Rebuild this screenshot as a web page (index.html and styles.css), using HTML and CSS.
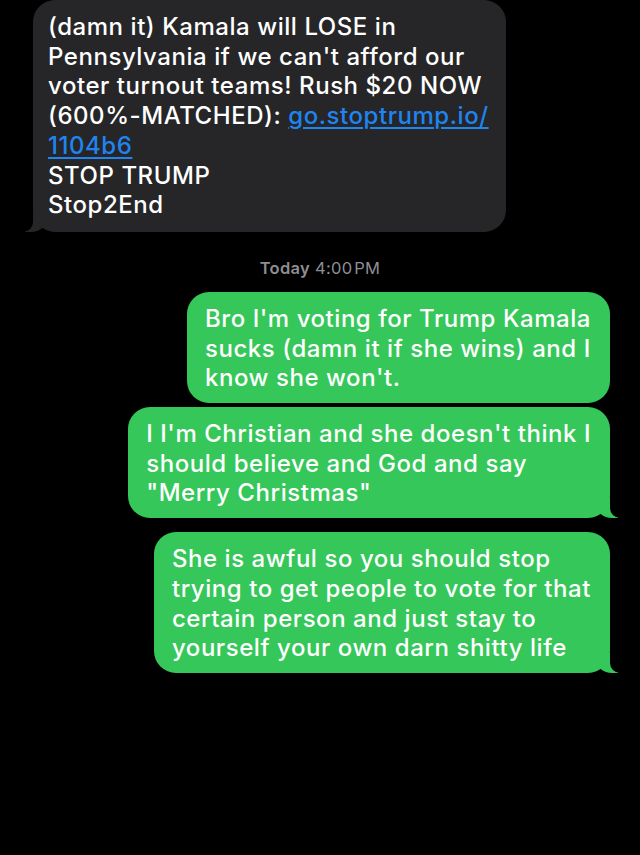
FILE: index.html
```html
<!DOCTYPE html>
<html lang="en">
<head>
    <meta charset="UTF-8">
    <meta name="viewport" content="width=device-width, initial-scale=1.0">
    <title>Messages</title>
    <link rel="stylesheet" href="styles.css">
</head>
<body>
    <div class="thread">
        <div class="bubble received tail">
            (damn it) Kamala will LOSE in<br>
            Pennsylvania if we can't afford our<br>
            voter turnout teams! Rush $20 NOW<br>
            (600%-MATCHED): <a href="#">go.stoptrump.io/<br>1104b6</a><br>
            STOP TRUMP<br>
            Stop2End
        </div>

        <div class="stamp"><b>Today</b> 4:00&#8202;PM</div>

        <div class="bubble sent">
            Bro I'm voting for Trump Kamala<br>
            sucks (damn it if she wins) and I<br>
            know she won't.
        </div>
        <div class="bubble sent tail">
            I I'm Christian and she doesn't think I<br>
            should believe and God and say<br>
            "Merry Christmas"
        </div>
        <div class="bubble sent tail last">
            She is awful so you should stop<br>
            trying to get people to vote for that<br>
            certain person and just stay to<br>
            yourself your own darn shitty life
        </div>
    </div>
</body>
</html>
```

FILE: styles.css
```css
body {
    margin: 0;
    background: #000;
    font-family: Inter, "Noto Sans", sans-serif;
    height: 855px;
    overflow: hidden;
}
.thread {
    display: flex;
    flex-direction: column;
    padding: 0 30px 0 33px;
}
.bubble {
    position: relative;
    color: #fff;
    font-size: 24px;
    font-weight: 450;
    line-height: 29.7px;
    padding: 12px 19px 10px 18px;
    border-radius: 22px;
    letter-spacing: 0.55px;
}
.received {
    align-self: flex-start;
    background: #262628;
    padding: 12px 17px 12px 15px;
}
.received a {
    color: #1f84f0;
    text-decoration: underline;
    text-underline-offset: 3px;
    text-decoration-thickness: 2px;
}
.sent {
    align-self: flex-end;
    background: #35c759;
    margin-top: 4px;
}
.sent.tail + .sent {
    margin-top: 14px;
}
.tail::before,
.tail::after {
    content: "";
    position: absolute;
    bottom: 0;
    height: 20px;
}
.sent.tail::before {
    right: -8px;
    width: 22px;
    background: #35c759;
    border-bottom-left-radius: 16px 14px;
}
.sent.tail::after {
    right: -10px;
    width: 10px;
    background: #000;
    border-bottom-left-radius: 10px;
}
.received.tail::before {
    left: -8px;
    width: 22px;
    background: #262628;
    border-bottom-right-radius: 16px 14px;
}
.received.tail::after {
    left: -10px;
    width: 10px;
    background: #000;
    border-bottom-right-radius: 10px;
}
.stamp {
    align-self: center;
    margin: 26px 0 10px -3px;
    color: #8e8e93;
    font-size: 16.5px;
    line-height: 20px;
    letter-spacing: 0.3px;
}
.stamp b {
    font-weight: 600;
}
```
